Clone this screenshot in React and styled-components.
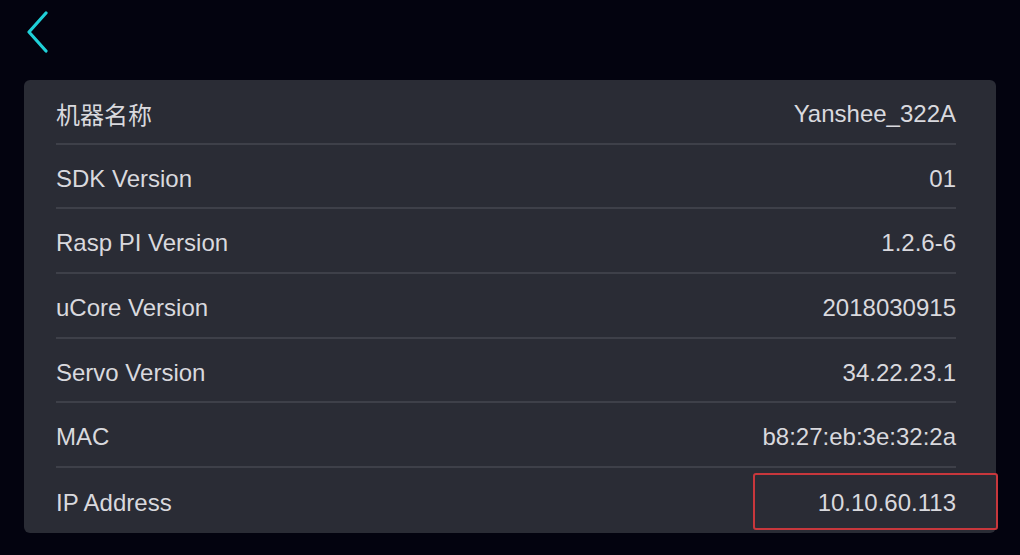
import React from 'react'
import styled, {createGlobalStyle} from 'styled-components'

const GlobalStyle = createGlobalStyle`
  html, body {
    margin: 0;
    padding: 0;
    background: #03030f;
  }
  body {
    font-family: "Liberation Sans", Arial, "Noto Sans CJK SC", sans-serif;
    width: 1020px;
    height: 555px;
    overflow: hidden;
  }
`

const Page = styled.div`
  display: flex;
  flex-direction: column;
  padding: 0 24px;
  height: 555px;
  box-sizing: border-box;
`

const Header = styled.header`
  height: 80px;
  flex-shrink: 0;
  display: flex;
  align-items: flex-start;
  padding-top: 11px;
  box-sizing: border-box;
`

const BackButton = styled.button`
  background: none;
  border: none;
  padding: 0;
  width: 26px;
  height: 42px;
  cursor: pointer;
  > svg {
    display: block;
  }
`

const Card = styled.section`
  background: #2a2c35;
  border-radius: 6px;
  padding: 0 40px 0 32px;
`

const Row = styled.div`
  position: relative;
  display: flex;
  justify-content: space-between;
  align-items: center;
  height: 64.7px;
  padding-top: 5px;
  color: #d9d9de;
  font-size: 24px;
  border-bottom: 2px solid #3e4049;
  box-sizing: border-box;
  &:last-of-type {
    border-bottom: none;
  }
`

const Label = styled.span``

const Value = styled.span``

const Highlight = styled.div`
  position: absolute;
  right: -42px;
  top: 5px;
  width: 245px;
  height: 57px;
  border: 2px solid #c8373c;
  border-radius: 3px;
  box-sizing: border-box;
  pointer-events: none;
`

const rows = [
  {label: '机器名称', value: 'Yanshee_322A'},
  {label: 'SDK Version', value: '01'},
  {label: 'Rasp PI Version', value: '1.2.6-6'},
  {label: 'uCore Version', value: '2018030915'},
  {label: 'Servo Version', value: '34.22.23.1'},
  {label: 'MAC', value: 'b8:27:eb:3e:32:2a'},
  {label: 'IP Address', value: '10.10.60.113', marked: true},
]

export default function App() {
  return (
    <Page>
      <GlobalStyle />
      <Header>
        <BackButton aria-label="back">
          <svg width="26" height="42" viewBox="0 0 26 42">
            <path
              d="M22 2 L5 21 L22 40"
              fill="none"
              stroke="#1fd0d8"
              strokeWidth="3.2"
              strokeLinecap="round"
              strokeLinejoin="round"
            />
          </svg>
        </BackButton>
      </Header>
      <Card>
        {rows.map((row) => (
          <Row key={row.label}>
            <Label>{row.label}</Label>
            <Value>{row.value}</Value>
            {row.marked && <Highlight />}
          </Row>
        ))}
      </Card>
    </Page>
  )
}
